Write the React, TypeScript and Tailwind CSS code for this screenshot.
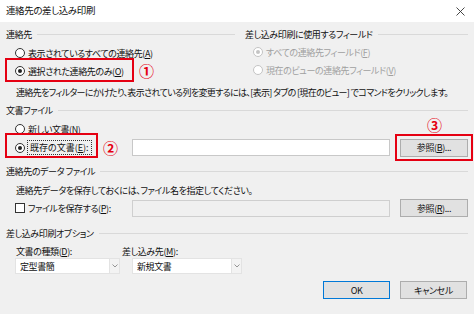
import React from 'react';

const RED = 'border-[#e50012]';

const GroupHeader: React.FC<{ label: string; className?: string }> = ({ label, className = '' }) => (
    <div className={`flex items-center h-[14px] ${className}`}>
        <span className="whitespace-nowrap">{label}</span>
        <div className="flex-1 h-px bg-[#d9d9d9] ml-[5px]" />
    </div>
);

const Radio: React.FC<{ checked?: boolean; disabled?: boolean }> = ({ checked, disabled }) => (
    <span
        className={`inline-flex items-center justify-center w-[10px] h-[10px] rounded-full border bg-white shrink-0 ${
            disabled ? 'border-[#c4c4c4]' : 'border-[#333]'
        }`}
    >
        {checked && <span className={`w-[4px] h-[4px] rounded-full ${disabled ? 'bg-[#c4c4c4]' : 'bg-[#222]'}`} />}
    </span>
);

const Btn: React.FC<{ children: React.ReactNode; primary?: boolean; className?: string }> = ({ children, primary, className = '' }) => (
    <div
        className={`flex items-center justify-center h-[18px] bg-[#e1e1e1] border ${
            primary ? 'border-[#0078d7]' : 'border-[#adadad]'
        } ${className}`}
    >
        {children}
    </div>
);

const Select: React.FC<{ value: string; className?: string }> = ({ value, className = '' }) => (
    <div className={`flex h-[16px] bg-white border border-[#e3e3e3] ${className}`}>
        <span className="flex-1 pl-[4px] flex items-center">{value}</span>
        <span className="w-[10px] flex items-center justify-center bg-[#f3f3f3] border-l border-[#e3e3e3]">
            <svg width="6" height="4" viewBox="0 0 6 4">
                <path d="M0.5 0.5 L3 3 L5.5 0.5" fill="none" stroke="#8a8a8a" strokeWidth="0.9" />
            </svg>
        </span>
    </div>
);

const Circled: React.FC<{ n: string; className?: string }> = ({ n, className = '' }) => (
    <span className={`absolute text-[#e50012] font-bold text-[15px] leading-none tracking-normal ${className}`}>{n}</span>
);

export default function App() {
    return (
        <div className="w-[474px] h-[316px] bg-white text-[#111] text-[9px] tracking-[-0.4px] leading-none font-['Noto_Sans_CJK_JP','Noto_Sans',sans-serif] [font-feature-settings:'palt'] overflow-hidden">
            {/* title bar */}
            <div className="h-[22px] flex items-center justify-between pl-[6px] pr-[9px]">
                <span className="text-[9.5px]">連絡先の差し込み印刷</span>
                <svg width="9" height="9" viewBox="0 0 9 9">
                    <path d="M0.5 0.5 L8.5 8.5 M8.5 0.5 L0.5 8.5" stroke="#333" strokeWidth="0.9" />
                </svg>
            </div>

            <div className="h-[292px] bg-[#f0f0f0] px-[6px] flex flex-col">
                {/* top two columns */}
                <div className="flex mt-[5px]">
                    <div className="w-[229px]">
                        <GroupHeader label="連絡先" />
                        <div className="flex items-center h-[18px] mt-[3px] pl-[9px] gap-[3px]">
                            <Radio />
                            <span>表示されているすべての連絡先(<u>A</u>)</span>
                        </div>
                        <div className="relative flex items-center h-[18px] pl-[9px] gap-[3px]">
                            <Radio checked />
                            <span>選択された連絡先のみ(<u>O</u>)</span>
                            <span className={`absolute left-[-1px] top-[-4px] w-[129px] h-[24px] border-2 ${RED}`} />
                            <Circled n="①" className="left-[133px] top-[1px]" />
                        </div>
                    </div>
                    <div className="flex-1 pl-[10px] text-[#a0a0a0]">
                        <GroupHeader label="差し込み印刷に使用するフィールド" className="text-[#111]" />
                        <div className="flex items-center h-[18px] mt-[2px] pl-[8px] gap-[3px]">
                            <Radio checked disabled />
                            <span>すべての連絡先フィールド(<u>F</u>)</span>
                        </div>
                        <div className="flex items-center h-[18px] pl-[8px] gap-[3px]">
                            <Radio disabled />
                            <span>現在のビューの連絡先フィールド(<u>V</u>)</span>
                        </div>
                    </div>
                </div>

                <div className="h-[14px] mt-[5px] pl-[10px] flex items-center whitespace-nowrap tracking-[-0.65px]">
                    連絡先をフィルターにかけたり、表示されている列を変更するには、[表示] タブの [現在のビュー] でコマンドをクリックします。
                </div>

                {/* document file */}
                <GroupHeader label="文書ファイル" className="mt-[4px]" />
                <div className="flex items-center h-[18px] mt-[3px] pl-[9px] gap-[3px]">
                    <Radio />
                    <span>新しい文書(<u>N</u>)</span>
                </div>
                <div className="flex items-center h-[19px]">
                    <div className="relative w-[126px] h-full flex items-center pl-[9px] gap-[3px]">
                        <Radio checked />
                        <span className="outline outline-1 outline-dotted outline-[#333] px-[2px] py-[2px] tracking-[0px]">既存の文書(<u>E</u>):</span>
                        <span className={`absolute left-[-1px] top-[-5px] w-[93px] h-[25px] border-2 ${RED}`} />
                        <Circled n="②" className="left-[97px] top-[2px]" />
                    </div>
                    <div className="w-[258px] h-[17px] bg-white border border-[#c8c8c8]" />
                    <div className="relative ml-[10px]">
                        <Btn className="w-[68px]">
                            参照(<u>B</u>)...
                        </Btn>
                        <span className={`absolute left-[-5px] top-[-5px] w-[78px] h-[27px] border-2 ${RED}`} />
                        <Circled n="③" className="left-[27px] top-[-22px]" />
                    </div>
                </div>

                {/* data file */}
                <GroupHeader label="連絡先のデータ ファイル" className="mt-[7px]" />
                <div className="h-[14px] mt-[5px] pl-[10px] flex items-center">
                    連絡先データを保存しておくには、ファイル名を指定してください。
                </div>
                <div className="flex items-center h-[18px] mt-[2px]">
                    <div className="w-[126px] flex items-center pl-[9px] gap-[3px]">
                        <span className="w-[10px] h-[10px] border border-[#333] bg-white" />
                        <span>ファイルを保存する(<u>P</u>):</span>
                    </div>
                    <div className="w-[258px] h-[17px] bg-[#f0f0f0] border border-[#cfcfcf]" />
                    <Btn className="w-[68px] ml-[10px]">
                        参照(<u>R</u>)...
                    </Btn>
                </div>

                {/* options */}
                <GroupHeader label="差し込み印刷オプション" className="mt-[9px]" />
                <div className="flex h-[14px] mt-[4px] items-center">
                    <span className="w-[116px] pl-[10px]">文書の種類(<u>D</u>):</span>
                    <span>差し込み先(<u>M</u>):</span>
                </div>
                <div className="flex">
                    <Select value="定型書簡" className="w-[105px] ml-[9px]" />
                    <Select value="新規文書" className="w-[110px] ml-[12px]" />
                </div>

                <div className="flex justify-end gap-[10px] mt-[7px] pr-[1px]">
                    <Btn primary className="w-[67px] h-[16px]">
                        OK
                    </Btn>
                    <Btn className="w-[67px] h-[16px]">キャンセル</Btn>
                </div>
            </div>
        </div>
    );
}
